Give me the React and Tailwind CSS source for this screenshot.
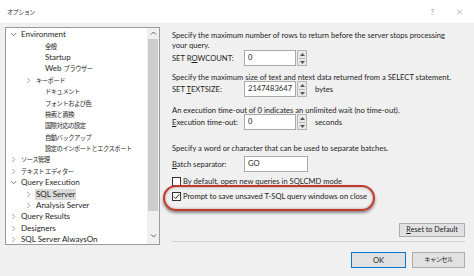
import React from 'react';

const FONT = { fontFamily: 'Lato, "Noto Sans CJK JP", sans-serif' };

const Chevron = ({ open }) => (
    <svg width="7" height="7" viewBox="0 0 7 7" className="shrink-0">
        {open ? (
            <path d="M1 2.2 L3.5 4.7 L6 2.2" fill="none" stroke="#6f6f6f" strokeWidth="1" />
        ) : (
            <path d="M2.3 1 L4.8 3.5 L2.3 6" fill="none" stroke="#a0a0a0" strokeWidth="1" />
        )}
    </svg>
);

// Japanese runs are narrower in the original UI font, so they get a smaller, tighter size
const Jp = ({ children }) => <span className="text-[6.3px] tracking-[-0.5px]">{children}</span>;

const treeItems = [
    { label: 'Environment', indent: 0, chevron: 'open' },
    { label: <Jp>全般</Jp>, indent: 2 },
    { label: 'Startup', indent: 2 },
    { label: <>Web <Jp>ブラウザー</Jp></>, indent: 2 },
    { label: <Jp>キーボード</Jp>, indent: 1, chevron: 'closed' },
    { label: <Jp>ドキュメント</Jp>, indent: 2 },
    { label: <Jp>フォントおよび色</Jp>, indent: 2 },
    { label: <Jp>検索と置換</Jp>, indent: 2 },
    { label: <Jp>国際対応の設定</Jp>, indent: 2 },
    { label: <Jp>自動バックアップ</Jp>, indent: 2 },
    { label: <Jp>設定のインポートとエクスポート</Jp>, indent: 2 },
    { label: <Jp>ソース管理</Jp>, indent: 0, chevron: 'closed' },
    { label: <Jp>テキスト エディター</Jp>, indent: 0, chevron: 'closed' },
    { label: 'Query Execution', indent: 0, chevron: 'open' },
    { label: 'SQL Server', indent: 1, chevron: 'closed', selected: true },
    { label: 'Analysis Server', indent: 1, chevron: 'closed' },
    { label: 'Query Results', indent: 0, chevron: 'closed' },
    { label: 'Designers', indent: 0, chevron: 'closed' },
    { label: 'SQL Server AlwaysOn', indent: 0, chevron: 'closed' },
];

const TreeRow = ({ item }) => {
    const pad = item.indent === 0 ? 'pl-[4px]' : item.indent === 1 ? 'pl-[19px]' : 'pl-[28px]';
    return (
        <div className={`flex items-center h-[11.4px] ${pad}`}>
            <div className="w-[8px] flex items-center">
                {item.chevron && <Chevron open={item.chevron === 'open'} />}
            </div>
            <span className={`ml-[2px] leading-[11px] whitespace-nowrap px-[1px] text-[8px] ${item.selected ? 'bg-[#d9d9d9]' : ''}`}>
                {item.label}
            </span>
        </div>
    );
};

const Spinner = () => (
    <div className="ml-[1px] w-[10px] h-[16px] border border-[#b5b5b5] bg-[#e9e9e9] flex flex-col items-center justify-center gap-[2px]">
        <svg width="5" height="3" viewBox="0 0 5 3"><path d="M0 3 L2.5 0 L5 3 Z" fill="#555" /></svg>
        <div className="w-[6px] h-px bg-[#b5b5b5]" />
        <svg width="5" height="3" viewBox="0 0 5 3"><path d="M0 0 L2.5 3 L5 0 Z" fill="#555" /></svg>
    </div>
);

const InputRow = ({ label, value, unit, spinner = true, wide }) => (
    <div className="flex items-center h-[16px]">
        <div className="w-[72px] whitespace-nowrap">{label}</div>
        <div className={`${wide ? 'w-[64px]' : 'w-[52px]'} h-[16px] bg-white border border-[#a9a9a9] pl-[3px] leading-[12px] whitespace-nowrap overflow-hidden`}>
            {value}
        </div>
        {spinner && <Spinner />}
        {unit && <span className="ml-[8px]">{unit}</span>}
    </div>
);

const Checkbox = ({ checked }) => (
    <div className="w-[9px] h-[9px] border border-[#333] bg-white flex items-center justify-center shrink-0">
        {checked && (
            <svg width="7" height="7" viewBox="0 0 7 7">
                <path d="M0.8 3.6 L2.7 5.5 L6.2 1.2" fill="none" stroke="#222" strokeWidth="1" />
            </svg>
        )}
    </div>
);

const Button = ({ children, primary, className = '' }) => (
    <div className={`flex items-center justify-center bg-[#e1e1e1] border whitespace-nowrap ${primary ? 'border-[#0078d7]' : 'border-[#adadad]'} ${className}`}>
        {children}
    </div>
);

export default function App() {
    return (
        <div className="w-[474px] h-[276px] bg-[#f0f0f0] text-[#1e1e1e] text-[7.6px] overflow-hidden flex flex-col" style={FONT}>
            <div className="h-[23px] bg-white flex items-center shrink-0">
                <span className="ml-[7px] text-[6.2px] tracking-[-0.6px] text-[#333]">オプション</span>
                <span className="ml-auto text-[8px] text-[#999]">?</span>
                <span className="ml-[22px] mr-[11px] text-[12px] leading-none text-[#888] font-light">×</span>
            </div>

            <div className="flex flex-1 relative">
                <div className="ml-[5px] mt-[4px] w-[155px] h-[218px] bg-white border border-[#9a9a9a] flex">
                    <div className="flex-1 pt-[1px] overflow-hidden">
                        {treeItems.map((item, i) => (
                            <TreeRow key={i} item={item} />
                        ))}
                    </div>
                    <div className="w-[12px] bg-[#f0f0f0] flex flex-col items-center">
                        <svg width="7" height="7" viewBox="0 0 7 7" className="mt-[2px]">
                            <path d="M1 4.5 L3.5 2 L6 4.5" fill="none" stroke="#606060" strokeWidth="1" />
                        </svg>
                        <div className="mt-[2px] w-[10px] h-[172px] bg-[#cdcdcd]" />
                        <div className="flex-1" />
                        <svg width="7" height="7" viewBox="0 0 7 7" className="mb-[5px]">
                            <path d="M1 2.5 L3.5 5 L6 2.5" fill="none" stroke="#606060" strokeWidth="1" />
                        </svg>
                    </div>
                </div>

                <div className="flex-1 ml-[12px] mr-[9px] pt-[7px] flex flex-col leading-[10px]">
                    <p>Specify the maximum number of rows to return before the server stops processing<br />your query.</p>
                    <div>
                        <InputRow label={<>SET R<u>O</u>WCOUNT:</>} value="0" />
                    </div>
                    <p className="mt-[6px]">Specify the maximum size of text and ntext data returned from a SELECT statement.</p>
                    <div className="mt-[-1px]">
                        <InputRow label={<>SET <u>T</u>EXTSIZE:</>} value="2147483647" unit="bytes" />
                    </div>
                    <p className="mt-[8px]">An execution time-out of 0 indicates an unlimited wait (no time-out).</p>
                    <div className="mt-[-1px]">
                        <InputRow label={<><u>E</u>xecution time-out:</>} value="0" unit="seconds" />
                    </div>
                    <p className="mt-[13px]">Specify a word or character that can be used to separate batches.</p>
                    <div className="mt-[3px]">
                        <InputRow label={<><u>B</u>atch separator:</>} value="GO" spinner={false} wide />
                    </div>
                    <div className="mt-[4px] h-[10px] flex items-center gap-[2px]">
                        <Checkbox />
                        <span>By default, open new queries in S<u>Q</u>LCMD mode</span>
                    </div>
                    <div className="mt-[5px] h-[10px] flex items-center gap-[2px]">
                        <Checkbox checked />
                        <span>Prompt to save unsaved T-SQL query windows on close</span>
                    </div>
                    <div className="mt-[22px] flex justify-end">
                        <Button className="w-[66px] h-[14px] text-[7.2px]"><u>R</u>eset to Default</Button>
                    </div>
                    <div className="mt-[4px] h-px bg-[#d0d0d0]" />
                    <div className="mt-[10px] flex justify-end gap-[6px]">
                        <Button primary className="w-[55px] h-[16px]">OK</Button>
                        <Button className="w-[53px] h-[16px] text-[6.4px] tracking-[-0.7px]">キャンセル</Button>
                    </div>
                </div>

                <div className="absolute left-[163px] top-[162px] w-[212px] h-[26px] rounded-full border-2 border-[#c0392b] shadow-[inset_0_0_3px_rgba(0,0,0,0.35),0_2px_3px_rgba(0,0,0,0.45)] pointer-events-none" />
            </div>
        </div>
    );
}
